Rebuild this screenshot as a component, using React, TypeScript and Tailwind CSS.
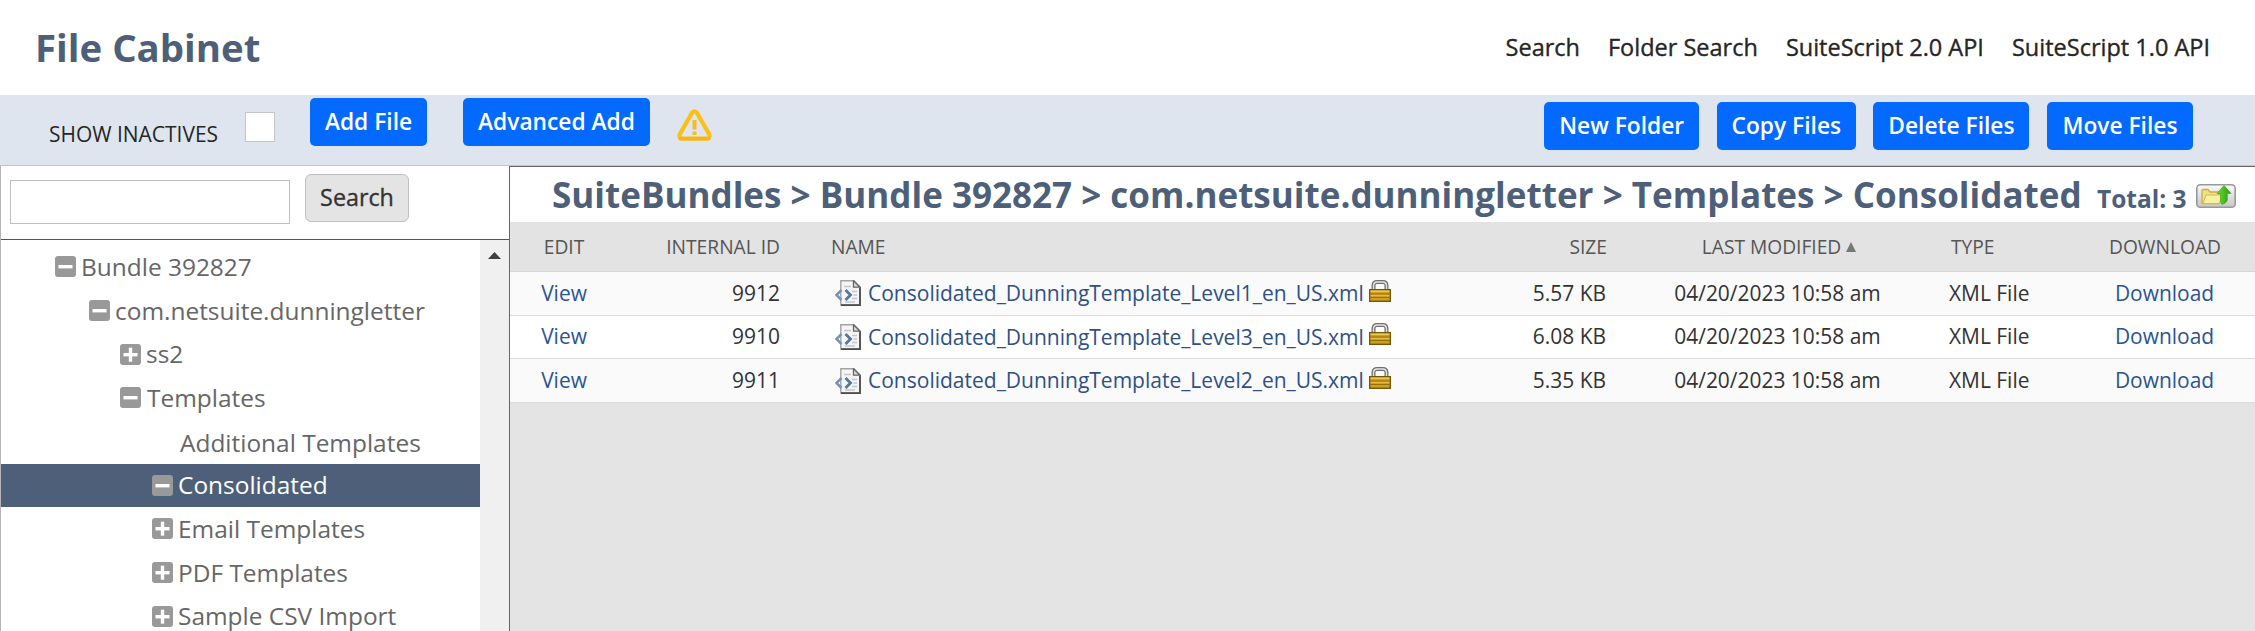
const navLinks = ['Search', 'Folder Search', 'SuiteScript 2.0 API', 'SuiteScript 1.0 API'];

const folderActions = [
  { label: 'New Folder', width: 'w-[155px]' },
  { label: 'Copy Files', width: 'w-[139px]' },
  { label: 'Delete Files', width: 'w-[156px]' },
  { label: 'Move Files', width: 'w-[146px]' },
];

type TreeItem = {
  label: string;
  indent: string;
  state?: 'open' | 'closed';
  selected?: boolean;
};

const tree: TreeItem[] = [
  { label: 'Bundle 392827', indent: 'pl-[54px] gap-[5px]', state: 'open' },
  { label: 'com.netsuite.dunningletter', indent: 'pl-[88px] gap-[5px]', state: 'open' },
  { label: 'ss2', indent: 'pl-[119px] gap-[5px]', state: 'closed' },
  { label: 'Templates', indent: 'pl-[119px] gap-[6px]', state: 'open' },
  { label: 'Additional Templates', indent: 'pl-[179px] pt-0.5' },
  { label: 'Consolidated', indent: 'pl-[151px] gap-[5px]', state: 'open', selected: true },
  { label: 'Email Templates', indent: 'pl-[151px] gap-[5px]', state: 'closed' },
  { label: 'PDF Templates', indent: 'pl-[151px] gap-[5px]', state: 'closed' },
  { label: 'Sample CSV Import', indent: 'pl-[151px] gap-[5px]', state: 'closed' },
];

const files = [
  { id: 9912, name: 'Consolidated_DunningTemplate_Level1_en_US.xml', size: '5.57 KB' },
  { id: 9910, name: 'Consolidated_DunningTemplate_Level3_en_US.xml', size: '6.08 KB' },
  { id: 9911, name: 'Consolidated_DunningTemplate_Level2_en_US.xml', size: '5.35 KB' },
];

const columns = 'grid grid-cols-[108px_162px_722px_105px_340px_128px_180px] items-center';

function ToggleIcon({ open }: { open: boolean }) {
  return (
    <svg className="mb-px h-[21px] w-[21px] shrink-0" viewBox="0 0 21 21">
      <rect width="21" height="21" rx="3" fill="#999" />
      <rect x="3.5" y="9" width="14" height="3.4" fill="#fff" />
      {!open && <rect x="8.8" y="3.7" width="3.4" height="14" fill="#fff" />}
    </svg>
  );
}

function WarningIcon() {
  return (
    <svg className="ml-[27px] mt-3.5 h-8 w-[35px]" viewBox="0 0 35 32" fill="none">
      <path
        d="M15.2 3.6 2.8 25.2Q1.6 29.5 5.4 29.5H29.6Q33.4 29.5 32.2 25.2L19.8 3.6Q17.5 1 15.2 3.6Z"
        stroke="#fac015"
        strokeWidth="4.2"
        strokeLinejoin="round"
      />
      <path d="M3 29.8H32" stroke="#f2b71c" strokeWidth="3.4" strokeLinecap="round" />
      <path d="M17.5 11V20.5M17.5 22.5V26" stroke="#f5bd25" strokeWidth="4" />
    </svg>
  );
}

function XmlFileIcon() {
  return (
    <svg className="h-[26px] w-[26px] shrink-0" viewBox="0 0 26 26" fill="none">
      <path d="M5.8.8H19L25 7V25H5.8Z" fill="#f5f5f5" stroke="#a3a3a3" strokeWidth="1.4" />
      <path d="M25 7V25.2H6" stroke="#4c4c4c" strokeWidth="1.8" />
      <path d="M18.5.8V7.2H25Z" fill="#ddd" stroke="#666" strokeWidth="1.3" />
      <path d="M9 6.5H16M17 11.5H22M18.5 15H22M17 18.5H22M10 22H20" stroke="#c4c8cc" strokeWidth="1.3" />
      <path d="M6.5 10 1.5 15 6.5 20" stroke="#7795b3" strokeWidth="2.5" />
      <path d="M10.5 10 15.5 15 10.5 20" stroke="#54789d" strokeWidth="2.8" />
    </svg>
  );
}

function LockIcon() {
  return (
    <svg className="mb-[5px] h-[22px] w-[22px] shrink-0" viewBox="0 0 22 22" fill="none">
      <path d="M4.5 10V5.2Q4.8 2 8 2H14Q17.2 2 17.5 5.2V10" stroke="#707070" strokeWidth="4" />
      <path d="M4.5 10V5.2Q4.8 2 8 2H14Q17.2 2 17.5 5.2V10" stroke="#e2e2e2" strokeWidth="1.4" />
      <rect x=".7" y="9.7" width="20.6" height="11.6" fill="#cf9f20" stroke="#735708" strokeWidth="1.4" />
      <path d="M1.5 11.2H20.5" stroke="#efcf5c" strokeWidth="1.4" />
      <path d="M1.5 14H20.5M1.5 17.5H20.5" stroke="#95700f" strokeWidth="1.2" />
      <path d="M1.5 15.5H20.5" stroke="#e7bb3c" strokeWidth="1.2" />
    </svg>
  );
}

function FolderUpIcon() {
  return (
    <svg className="mt-0.5 h-6 w-10 shrink-0" viewBox="0 0 40 24" fill="none">
      <defs>
        <linearGradient id="button-face" x1="0" y1="0" x2="0" y2="1">
          <stop offset="0" stopColor="#fafafa" />
          <stop offset="1" stopColor="#c6c6c6" />
        </linearGradient>
        <linearGradient id="arrow" x1="0" y1="0" x2="1" y2="0">
          <stop offset="0" stopColor="#70dc32" />
          <stop offset="1" stopColor="#259b10" />
        </linearGradient>
      </defs>
      <rect x=".8" y=".8" width="38.4" height="22.4" rx="3.5" fill="url(#button-face)" stroke="#999" strokeWidth="1.6" />
      <path d="M6 19V6.5Q6 5.5 7 5.5H12L14 8H23V19.5H7Z" fill="#f1e184" stroke="#c9af45" strokeWidth="1.3" />
      <path d="M7 19.5 10 11H26L23.5 19.5Z" fill="#faf0a0" stroke="#d0b950" strokeWidth="1" />
      <path d="M28 1.5 35 9.5H31.3V16Q30.5 19 26 20.5 25 19.5 24.5 17V9.5H21Z" fill="url(#arrow)" stroke="#37a71e" strokeWidth=".7" />
    </svg>
  );
}

export default function App() {
  return (
    <div className="flex h-[631px] w-[2255px] flex-col overflow-hidden bg-white font-['Open_Sans',sans-serif] text-[#333]">
      {/* Page header */}
      <header className="flex h-[95px] items-center justify-between pl-[35px] pr-[45px]">
        <h1 className="pt-px text-[38.4px] font-bold text-[#4d5f79]">File Cabinet</h1>
        <nav className="flex gap-[28px] text-[23.5px] text-[#262626] [-webkit-text-stroke:0.35px]">
          {navLinks.map((link) => (
            <a key={link} href="#">
              {link}
            </a>
          ))}
        </nav>
      </header>

      {/* Toolbar */}
      <div className="flex h-[71px] items-start border-b border-[#c4c6ca] bg-[#dfe5ef] pr-[62px] text-[22.75px] font-semibold text-white">
        <label className="flex items-start pl-[49px] text-[20.95px] font-normal text-[#262626]">
          <span className="mt-[23px] w-[196px] leading-8">SHOW INACTIVES</span>
          <span className="mt-[17px] h-[30px] w-[30px] border border-[#c3c5c8] bg-white" />
        </label>
        <button className="ml-[35px] mt-[3px] h-12 w-[117px] rounded-[5px] bg-[#0469ff]">Add File</button>
        <button className="ml-[36px] mt-[3px] h-12 w-[187px] rounded-[5px] bg-[#0469ff]">Advanced Add</button>
        <WarningIcon />
        <div className="ml-auto mt-[7px] flex gap-[17.6px]">
          {folderActions.map((action) => (
            <button key={action.label} className={`h-12 rounded-[5px] bg-[#0469ff] ${action.width}`}>
              {action.label}
            </button>
          ))}
        </div>
      </div>

      <div className="flex min-h-0 flex-1">
        {/* Folder tree */}
        <aside className="flex w-[510px] shrink-0 flex-col border-l border-r border-l-[#b5b5b5] border-r-[#666]">
          <div className="flex h-[74px] shrink-0 items-start border-b border-[#555] pl-[9px]">
            <input className="mt-3.5 h-11 w-[280px] border border-[#c0c0c0]" />
            <button className="ml-[15px] mt-2 h-12 w-[104px] rounded-[6px] border border-[#c0c0c0] bg-[#e4e4e4] pb-0.5 text-[23.3px] [-webkit-text-stroke:0.35px]">
              Search
            </button>
          </div>
          <div className="flex min-h-0 flex-1">
            <ul className="flex-1 overflow-hidden pt-[5.5px] text-[24.45px] text-[#666]">
              {tree.map((item) => (
                <li
                  key={item.label}
                  className={`flex h-[43.67px] items-center whitespace-nowrap ${item.indent} ${
                    item.selected ? 'bg-[#4e5f79] text-white' : ''
                  }`}
                >
                  {item.state && <ToggleIcon open={item.state === 'open'} />}
                  <span>{item.label}</span>
                </li>
              ))}
            </ul>
            <div className="w-[29px] bg-[#f0f0f0] pl-2 pt-3">
              <svg className="h-[7px] w-[13px]" viewBox="0 0 13 7">
                <path d="M6.5 0 13 7H0Z" fill="#404040" />
              </svg>
            </div>
          </div>
        </aside>

        {/* File list */}
        <main className="flex-1 border-t border-[#666] bg-[#e4e4e4]">
          <div className="flex h-[55px] items-center bg-white pl-[42px] font-bold whitespace-nowrap text-[#4d5f79]">
            <div className="flex w-[1644px] items-baseline pt-0.5">
              <h2 className="w-[1545px] text-[35.04px]">
                SuiteBundles &gt; Bundle 392827 &gt; com.netsuite.dunningletter &gt; Templates &gt; Consolidated
              </h2>
              <span className="text-[24.5px]">Total: 3</span>
            </div>
            <FolderUpIcon />
          </div>

          <div className={`${columns} h-[50px] border-b border-[#d8d8d8] bg-[#e3e3e3] pt-px text-[19.2px] text-[#555]`}>
            <span className="text-center">EDIT</span>
            <span className="text-right">INTERNAL ID</span>
            <span className="pl-[51px]">NAME</span>
            <span className="text-right">SIZE</span>
            <span className="flex items-center justify-center gap-[5px] pl-1">
              LAST MODIFIED
              <svg className="h-2.5 w-2.5" viewBox="0 0 10 10">
                <path d="M5 0 10 10H0Z" fill="#777" />
              </svg>
            </span>
            <span className="pl-1">TYPE</span>
            <span className="text-center">DOWNLOAD</span>
          </div>

          {files.map((file) => (
            <div
              key={file.id}
              className={`${columns} h-[43.67px] border-b border-[#dcdcdc] text-[20.95px] odd:bg-[#fafafa] even:bg-white`}
            >
              <a href="#" className="text-center text-[#2b5493]">
                View
              </a>
              <span className="text-right">{file.id}</span>
              <span className="flex items-center pl-[55px]">
                <XmlFileIcon />
                <a href="#" className="ml-[7px] mr-[5px] pt-px text-[21px] text-[#2f5086]">
                  {file.name}
                </a>
                <LockIcon />
              </span>
              <span className="pr-px text-right">{file.size}</span>
              <span className="pl-px text-center">04/20/2023 10:58 am</span>
              <span className="pl-0.5">XML File</span>
              <a href="#" className="pr-px text-center text-[#2b5493]">
                Download
              </a>
            </div>
          ))}
        </main>
      </div>
    </div>
  );
}
